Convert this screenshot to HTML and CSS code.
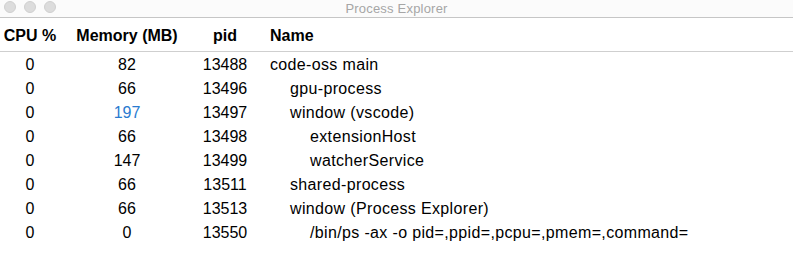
FILE: index.html
```html
<!DOCTYPE html>
<html lang="en">
<head>
  <meta charset="UTF-8">
  <title>Process Explorer</title>
  <link rel="stylesheet" href="styles.css">
</head>
<body>

<div class="titlebar">
  <div class="lights">
    <span class="light"></span>
    <span class="light"></span>
    <span class="light"></span>
  </div>
  <div class="title">Process Explorer</div>
</div>

<div class="table">
  <div class="row head">
    <div class="cell">CPU %</div>
    <div class="cell">Memory (MB)</div>
    <div class="cell">pid</div>
    <div class="cell name">Name</div>
  </div>

  <div class="row">
    <div class="cell">0</div><div class="cell">82</div><div class="cell">13488</div>
    <div class="cell name">code-oss main</div>
  </div>
  <div class="row">
    <div class="cell">0</div><div class="cell">66</div><div class="cell">13496</div>
    <div class="cell name lvl1">gpu-process</div>
  </div>
  <div class="row">
    <div class="cell">0</div><div class="cell high">197</div><div class="cell">13497</div>
    <div class="cell name lvl1">window (vscode)</div>
  </div>
  <div class="row">
    <div class="cell">0</div><div class="cell">66</div><div class="cell">13498</div>
    <div class="cell name lvl2">extensionHost</div>
  </div>
  <div class="row">
    <div class="cell">0</div><div class="cell">147</div><div class="cell">13499</div>
    <div class="cell name lvl2">watcherService</div>
  </div>
  <div class="row">
    <div class="cell">0</div><div class="cell">66</div><div class="cell">13511</div>
    <div class="cell name lvl1">shared-process</div>
  </div>
  <div class="row">
    <div class="cell">0</div><div class="cell">66</div><div class="cell">13513</div>
    <div class="cell name lvl1">window (Process Explorer)</div>
  </div>
  <div class="row">
    <div class="cell">0</div><div class="cell">0</div><div class="cell">13550</div>
    <div class="cell name lvl2">/bin/ps -ax -o pid=,ppid=,pcpu=,pmem=,command=</div>
  </div>
</div>

</body>
</html>
```

FILE: styles.css
```css
* { margin: 0; padding: 0; box-sizing: border-box; }
html, body { width: 100%; height: 100%; background: #fff; font-family: "Liberation Sans", Arial, sans-serif; color: #000; }

/* Window title bar */
.titlebar { height: 18px; display: flex; align-items: center; justify-content: center; position: relative; background: #fbfbfb; border-bottom: 1px solid #c6c6c6; }
.lights { position: absolute; left: 4px; top: 1px; display: flex; gap: 8px; }
.light { width: 12px; height: 12px; border-radius: 50%; background: #dcdcdc; border: 1px solid #d0d0d0; }
.title { font-size: 13px; color: #a6a6a6; line-height: 16px; letter-spacing: 0.2px; }

/* Process table */
.row { display: grid; grid-template-columns: 60px 134px 62px 1fr; height: 24px; padding-top: 2px; align-items: center; font-size: 16px; }
.cell { text-align: center; white-space: nowrap; }
.cell.name { text-align: left; padding-left: 14px; letter-spacing: 0.35px; }
.cell.lvl1 { padding-left: 34px; }
.cell.lvl2 { padding-left: 54px; }
.cell.high { color: #2a7bd0; }

.row.head { height: 34px; padding-top: 3px; font-weight: bold; border-bottom: 1px solid #cfcfcf; }
.row.head .cell.name { letter-spacing: 0; }
```
